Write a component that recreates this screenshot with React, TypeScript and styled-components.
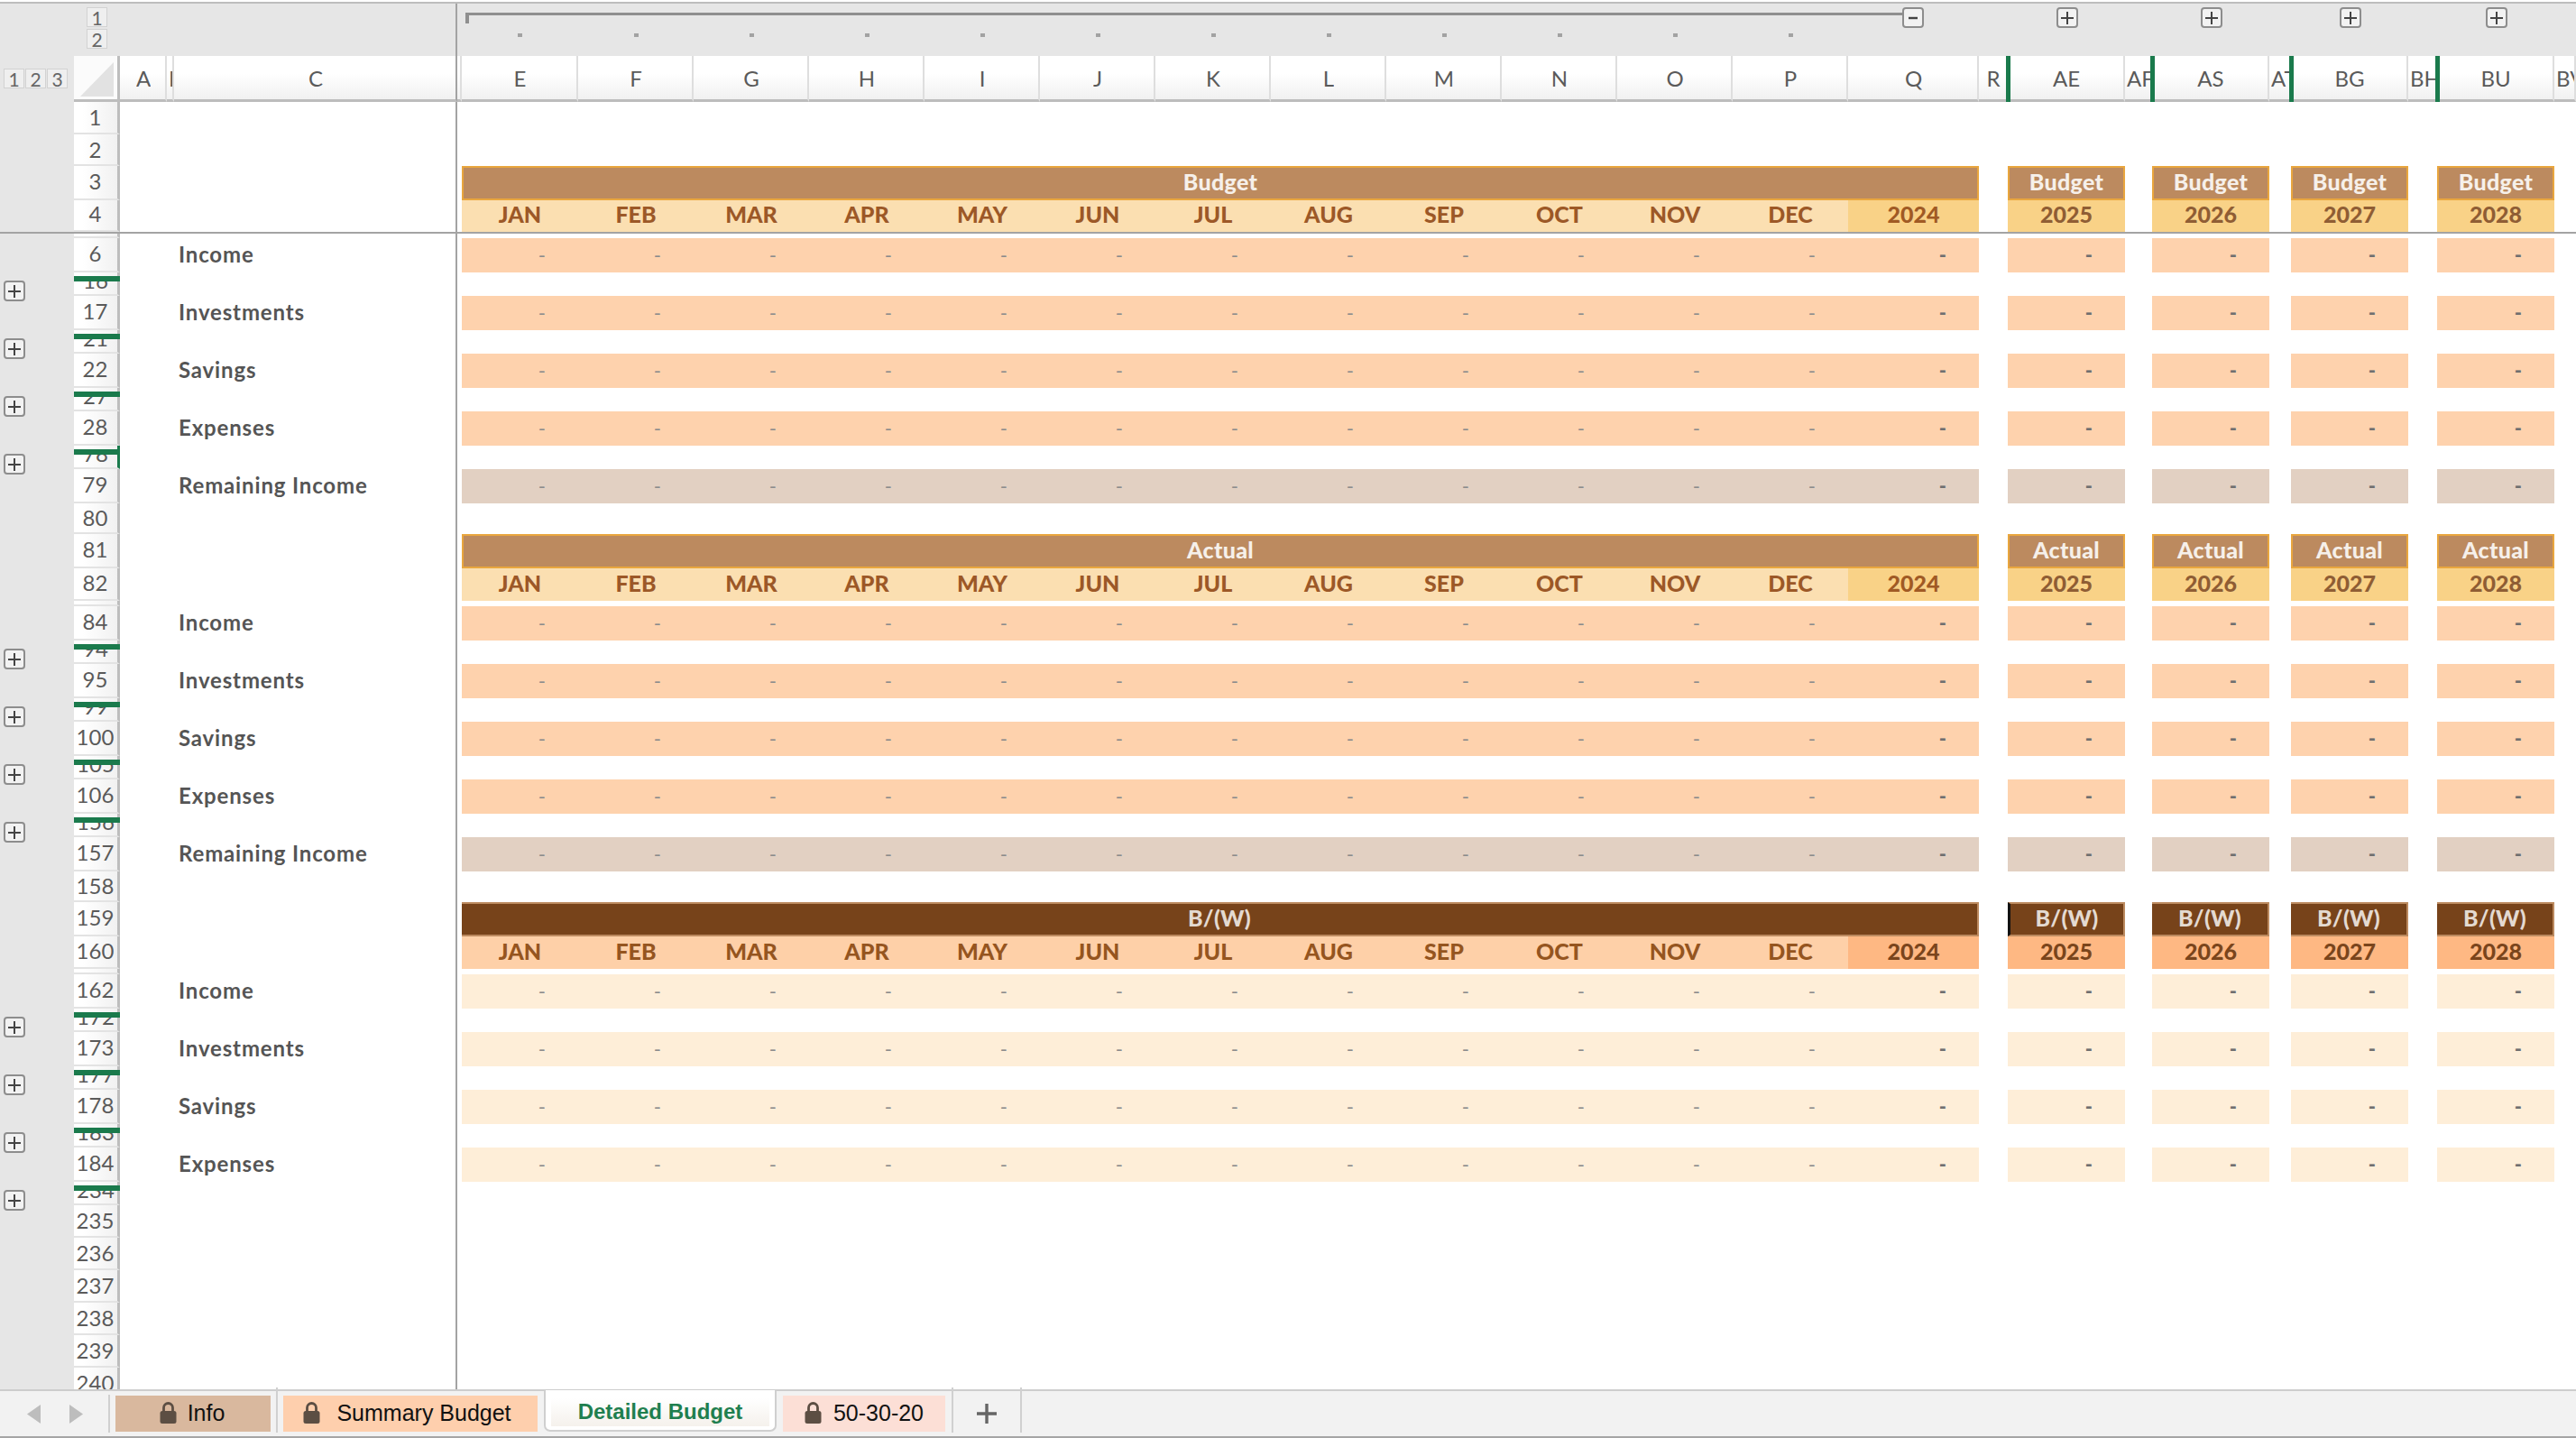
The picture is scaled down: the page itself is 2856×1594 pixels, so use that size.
import React from 'react';
import styled, { createGlobalStyle } from 'styled-components';

// one grid template shared by every row, so the bands line up with the column headers
const COLUMN_WIDTHS = [
  82, 51, 52, 8, 314, 5, 129, 128, 128, 128, 128, 128, 128, 128, 128, 128, 128, 128, 145, 32, 130,
  30, 130, 24, 130, 32, 130, 24,
];
const TEMPLATE = COLUMN_WIDTHS.map((w) => `${w}px`).join(' ');

const MONTHS = ['JAN', 'FEB', 'MAR', 'APR', 'MAY', 'JUN', 'JUL', 'AUG', 'SEP', 'OCT', 'NOV', 'DEC'];
const YEAR_COLS = [21, 23, 25, 27];
const YEARS = ['2025', '2026', '2027', '2028'];
const Q_COL = 19;
const GREEN = '#1a7a4c';

const HEADERS: { label: string; col: number; mark?: boolean; clip?: boolean }[] = [
  { label: 'A', col: 3 },
  { label: 'B', col: 4, clip: true },
  { label: 'C', col: 5 },
  { label: 'D', col: 6, clip: true },
  ...'EFGHIJKLMNOP'.split('').map((label, i) => ({ label, col: 7 + i })),
  { label: 'Q', col: 19 },
  { label: 'R', col: 20 },
  { label: 'AE', col: 21, mark: true },
  { label: 'AF', col: 22, clip: true },
  { label: 'AS', col: 23, mark: true },
  { label: 'AT', col: 24, clip: true },
  { label: 'BG', col: 25, mark: true },
  { label: 'BH', col: 26, clip: true },
  { label: 'BU', col: 27, mark: true },
  { label: 'BV', col: 28, clip: true },
];

type Tone = 'peach' | 'taupe' | 'cream';
type Theme = 'budget' | 'variance';

const TONES: Record<Tone, string> = {
  peach: '#fed2ad',
  taupe: '#e2d0c2',
  cream: '#feeed8',
};

const PALETTE = {
  budget: {
    bar: '#bc8a5f',
    edge: '#e9a63e',
    barText: '#f6f0ea',
    month: '#fbdfb1',
    strong: '#f9d287',
    monthText: '#9c5827',
    yearText: '#8f5d34',
    totalText: '#a05a24',
  },
  variance: {
    bar: '#77431a',
    edge: '#bc8a5f',
    barText: '#e4dad1',
    month: '#fed0a8',
    strong: '#feb883',
    monthText: '#95551f',
    yearText: '#7a451c',
    totalText: '#7a451c',
  },
};

const GlobalStyle = createGlobalStyle`
  * {
    box-sizing: border-box;
  }
  html,
  body {
    margin: 0;
    padding: 0;
    background: #ffffff;
  }
  body {
    font-family: Lato, 'Liberation Sans', sans-serif;
  }
`;

const Window = styled.div`
  width: 2856px;
  height: 1594px;
  display: flex;
  flex-direction: column;
  overflow: hidden;
  background: #ffffff;
`;

const OutlineBar = styled.div`
  flex: none;
  margin-top: 2px;
  height: 60px;
  border-top: 2px solid #bdbdbd;
  background: #e6e6e6;
  display: grid;
  grid-template-columns: ${TEMPLATE};
  grid-template-rows: 32px 26px;
`;

const LevelStack = styled.div`
  grid-column: 2;
  grid-row: 1 / span 2;
  padding-top: 4px;
  display: flex;
  flex-direction: column;
  align-items: center;
  gap: 2px;
`;

const LevelButton = styled.div`
  width: 23px;
  height: 22px;
  background: #efefef;
  border: 1px solid #d2d2d2;
  display: flex;
  align-items: center;
  justify-content: center;
  color: #666666;
  font-size: 21px;
  line-height: 1;
`;

const FrozenStrip = styled.div`
  grid-column: 3 / span 3;
  grid-row: 1 / span 2;
  border-right: 2px solid #a3a3a3;
`;

const OutlineTrack = styled.div`
  grid-column: 7 / span 13;
  grid-row: 1;
  padding: 4px 61px 0 4px;
  display: flex;
  align-items: flex-start;
`;

const Bracket = styled.div`
  flex: 1;
  height: 12px;
  margin-top: 6px;
  border-top: 3px solid #8f8f8f;
  border-left: 4px solid #8f8f8f;
`;

const OutlineDot = styled.div<{ $col: number }>`
  grid-column: ${({ $col }) => $col};
  grid-row: 2;
  justify-self: center;
  width: 5px;
  height: 4px;
  margin-top: 1px;
  background: #a2a2a2;
`;

const OutlineCell = styled.div<{ $col: number }>`
  grid-column: ${({ $col }) => $col};
  grid-row: 1;
  padding: 4px 0 0 2px;
  display: flex;
  justify-content: center;
`;

const ToggleButton = styled.div`
  position: relative;
  z-index: 2;
  width: 24px;
  height: 23px;
  flex: none;
  background: #f2f2f2;
  border: 2px solid #8d8d8d;
  border-radius: 4px;
  display: flex;
  align-items: center;
  justify-content: center;
`;

const HeaderRow = styled.div`
  flex: none;
  height: 51px;
  display: grid;
  grid-template-columns: ${TEMPLATE};
  background: #e6e6e6;
`;

const LevelRow = styled.div`
  grid-column: 1;
  padding-left: 4px;
  padding-bottom: 1px;
  display: flex;
  align-items: center;
  gap: 1px;
`;

const Corner = styled.div`
  grid-column: 2;
  background: #fbfbfb;
  border-right: 3px solid #bdbdbd;
  border-bottom: 3px solid #bdbdbd;
  display: flex;
  align-items: center;
  padding: 4px 0 0 7px;
`;

const ColumnHead = styled.div<{ $col: number; $mark?: boolean; $clip?: boolean; $frozen?: boolean }>`
  position: relative;
  grid-column: ${({ $col }) => $col};
  background: linear-gradient(#ffffff 40%, #f1f1f1);
  border-bottom: 3px solid #bdbdbd;
  border-right: ${({ $frozen }) => ($frozen ? '2px solid #a3a3a3' : '2px solid #dedede')};
  display: flex;
  align-items: center;
  justify-content: ${({ $clip }) => ($clip ? 'flex-start' : 'center')};
  padding-left: 2px;
  color: #5a5a5a;
  font-size: 24px;
  white-space: nowrap;
  ${({ $mark }) =>
    $mark &&
    `
    &::before {
      content: '';
      position: absolute;
      left: -2px;
      top: 0;
      bottom: -3px;
      width: 5px;
      background: ${GREEN};
    }
  `}
`;

const HeadClip = styled.div`
  overflow: hidden;
  display: flex;
  justify-content: inherit;
  min-width: 0;
  max-width: 100%;
`;

const Body = styled.div`
  flex: 1;
  min-height: 0;
  overflow: hidden;
`;

const Row = styled.div<{ $h: number }>`
  height: ${({ $h }) => $h}px;
  display: grid;
  grid-template-columns: ${TEMPLATE};
  grid-template-rows: ${({ $h }) => $h}px;
  & > * {
    grid-row: 1;
  }
`;

const Gutter = styled.div`
  grid-column: 1;
  background: #e6e6e6;
  padding: 9px 0 0 4px;
`;

const RowNumber = styled.div<{ $pad?: number }>`
  grid-column: 2;
  background: linear-gradient(90deg, #ffffff 20%, #f1f1f1);
  border-right: 3px solid #bdbdbd;
  border-bottom: 2px solid #e3e3e3;
  padding-bottom: ${({ $pad }) => $pad ?? 0}px;
  padding-right: 1px;
  display: flex;
  align-items: center;
  justify-content: center;
  color: #5a5a5a;
  font-size: 24px;
  line-height: 1;
`;

const Stub = styled.div<{ $edge?: boolean }>`
  grid-column: 2;
  padding-top: 4px;
  background: linear-gradient(90deg, #ffffff 20%, #f1f1f1);
  border-right: 3px solid ${({ $edge }) => ($edge ? GREEN : '#bdbdbd')};
  border-bottom: 2px solid #e3e3e3;
`;

const StubBar = styled.div`
  height: 6px;
  margin-right: -3px;
  background: ${GREEN};
`;

const StubClip = styled.div`
  height: 14px;
  overflow: hidden;
`;

const StubNumber = styled.div`
  margin-top: -9px;
  text-align: center;
  color: #5a5a5a;
  font-size: 24px;
  line-height: 15px;
`;

const FrozenCell = styled.div`
  grid-column: 3 / span 3;
  border-right: 2px solid #a3a3a3;
`;

const LabelCell = styled(FrozenCell)`
  padding: 0 0 3px 65px;
  display: flex;
  align-items: center;
  color: #555555;
  font-size: 24px;
  font-weight: 700;
  letter-spacing: 0.85px;
`;

const DataCell = styled.div<{ $col: number; $tone: Tone; $strong?: boolean }>`
  grid-column: ${({ $col }) => $col};
  background: ${({ $tone }) => TONES[$tone]};
  padding: 0 36px 2px 0;
  display: flex;
  align-items: center;
  justify-content: flex-end;
  color: ${({ $strong }) => ($strong ? '#6f6f6f' : '#8c8c8c')};
  font-size: 22px;
  font-weight: ${({ $strong }) => ($strong ? 900 : 400)};
`;

const BarCell = styled.div<{ $col: string; $theme: Theme; $first?: boolean }>`
  grid-column: ${({ $col }) => $col};
  background: ${({ $theme }) => PALETTE[$theme].bar};
  border: 2px solid ${({ $theme }) => PALETTE[$theme].edge};
  ${({ $theme }) => $theme === 'variance' && 'border-left: none;'}
  ${({ $first }) => $first && 'border-left: 3px solid #111111;'}
  padding-bottom: 5px;
  display: flex;
  align-items: center;
  justify-content: center;
  color: ${({ $theme }) => PALETTE[$theme].barText};
  font-size: 25px;
  font-weight: 900;
  letter-spacing: 0.3px;
`;

const MonthCell = styled.div<{ $col: number; $theme: Theme; $strong?: boolean; $color: string }>`
  grid-column: ${({ $col }) => $col};
  background: ${({ $theme, $strong }) =>
    $strong ? PALETTE[$theme].strong : PALETTE[$theme].month};
  display: flex;
  align-items: center;
  justify-content: center;
  padding-bottom: 5px;
  color: ${({ $color }) => $color};
  font-size: 25px;
  font-weight: 900;
`;

const FreezeLine = styled.div`
  height: 2px;
  background: #a3a3a3;
`;

const TabStrip = styled.div`
  flex: none;
  height: 54px;
  position: relative;
  z-index: 3;
  background: #f2f2f2;
  border-top: 2px solid #cdcdcd;
  border-bottom: 2px solid #a6a6a6;
  display: flex;
  align-items: center;
`;

const PagerZone = styled.div`
  width: 122px;
  height: 42px;
  flex: none;
  padding-left: 30px;
  border-right: 2px solid #d0d0d0;
  display: flex;
  align-items: center;
  gap: 32px;
`;

const Tab = styled.div<{ $w: number; $bg: string; $gap: number; $ml: number; $pr?: number }>`
  width: ${({ $w }) => $w}px;
  height: 40px;
  margin-left: ${({ $ml }) => $ml}px;
  padding: 0 ${({ $pr }) => $pr ?? 0}px 2px 0;
  flex: none;
  background: ${({ $bg }) => $bg};
  display: flex;
  align-items: center;
  justify-content: center;
  gap: ${({ $gap }) => $gap}px;
  color: #111111;
  font-family: 'Liberation Sans', Arial, sans-serif;
  font-size: 25px;
`;

const ActiveTab = styled.div`
  width: 258px;
  height: 46px;
  margin: -7px 0 0 7px;
  padding: 9px 6px 4px;
  flex: none;
  background: #ffffff;
  border: 2px solid #cfcfcf;
  border-top: none;
  border-radius: 0 0 7px 7px;
  display: flex;
`;

const ActiveTabLabel = styled.div`
  flex: 1;
  background: linear-gradient(#ffffff, #f5f1ec);
  display: flex;
  align-items: center;
  justify-content: center;
  color: #1f7f4f;
  font-family: 'Liberation Sans', Arial, sans-serif;
  font-size: 24px;
  font-weight: 700;
`;

const TabSeparator = styled.div<{ $ml: number }>`
  width: 2px;
  height: 50px;
  margin: -8px 0 0 ${({ $ml }) => $ml}px;
  flex: none;
  background: #d0d0d0;
`;

const AddSheet = styled.div`
  width: 74px;
  flex: none;
  display: flex;
  justify-content: center;
`;

const PlusMark = () => (
  <svg width="16" height="16" viewBox="0 0 16 16">
    <path d="M8 1v14M1 8h14" stroke="#444444" strokeWidth="2" fill="none" />
  </svg>
);

const MinusMark = () => (
  <svg width="16" height="16" viewBox="0 0 16 16">
    <path d="M3 8h10" stroke="#444444" strokeWidth="2.4" fill="none" />
  </svg>
);

const AddMark = () => (
  <svg width="22" height="22" viewBox="0 0 22 22">
    <path d="M11 0v22M0 11h22" stroke="#666666" strokeWidth="3.4" fill="none" />
  </svg>
);

const Lock = () => (
  <svg width="19" height="24" viewBox="0 0 19 24">
    <path d="M4.5 11V6.5a5 5 0 0 1 10 0V11" stroke="#5c4e43" strokeWidth="2.8" fill="none" />
    <rect x="0.5" y="10" width="18" height="14" rx="2.5" fill="#5c4e43" />
  </svg>
);

const Pager = ({ flip }: { flip?: boolean }) => (
  <svg width="15" height="21" viewBox="0 0 15 21">
    <path d={flip ? 'M0 0l15 10.5L0 21z' : 'M15 0L0 10.5 15 21z'} fill="#bdbdbd" />
  </svg>
);

const Corners = () => (
  <svg width="37" height="38" viewBox="0 0 37 38">
    <path d="M37 0v38H0z" fill="#e2e2e2" />
  </svg>
);

const BlankRow = ({ n, h, pad }: { n: number; h: number; pad?: number }) => (
  <Row $h={h}>
    <Gutter />
    <RowNumber $pad={pad}>{n}</RowNumber>
    <FrozenCell />
  </Row>
);

const DataRow = ({ n, label, tone }: { n: number; label: string; tone: Tone }) => (
  <Row $h={38}>
    <Gutter />
    <RowNumber $pad={2}>{n}</RowNumber>
    <LabelCell>{label}</LabelCell>
    {MONTHS.map((m, i) => (
      <DataCell key={m} $col={7 + i} $tone={tone}>
        -
      </DataCell>
    ))}
    <DataCell $col={Q_COL} $tone={tone} $strong>
      -
    </DataCell>
    {YEAR_COLS.map((c) => (
      <DataCell key={c} $col={c} $tone={tone} $strong>
        -
      </DataCell>
    ))}
  </Row>
);

const CollapsedRow = ({ n, edge }: { n: number; edge?: boolean }) => (
  <Row $h={26}>
    <Gutter>
      <ToggleButton>
        <PlusMark />
      </ToggleButton>
    </Gutter>
    <Stub $edge={edge}>
      <StubBar />
      <StubClip>
        <StubNumber>{n}</StubNumber>
      </StubClip>
    </Stub>
    <FrozenCell />
  </Row>
);

const GroupRows = ({
  rows,
  tone,
}: {
  rows: { n: number; label: string; hidden: number; edge?: boolean }[];
  tone: Tone;
}) => (
  <>
    {rows.map((r) => (
      <React.Fragment key={r.n}>
        <DataRow n={r.n} label={r.label} tone={tone} />
        <CollapsedRow n={r.hidden} edge={r.edge} />
      </React.Fragment>
    ))}
  </>
);

const TitleRows = ({
  title,
  theme,
  barRow,
  monthRow,
  monthHeight,
}: {
  title: string;
  theme: Theme;
  barRow: number;
  monthRow: number;
  monthHeight: number;
}) => {
  const colors = PALETTE[theme];
  return (
    <>
      <Row $h={38}>
        <Gutter />
        <RowNumber $pad={2}>{barRow}</RowNumber>
        <FrozenCell />
        <BarCell $col="7 / span 13" $theme={theme}>
          {title}
        </BarCell>
        {YEAR_COLS.map((c, i) => (
          <BarCell key={c} $col={String(c)} $theme={theme} $first={theme === 'variance' && i === 0}>
            {title}
          </BarCell>
        ))}
      </Row>
      <Row $h={monthHeight}>
        <Gutter />
        <RowNumber $pad={3}>{monthRow}</RowNumber>
        <FrozenCell />
        {MONTHS.map((m, i) => (
          <MonthCell key={m} $col={7 + i} $theme={theme} $color={colors.monthText}>
            {m}
          </MonthCell>
        ))}
        <MonthCell $col={Q_COL} $theme={theme} $strong $color={colors.totalText}>
          2024
        </MonthCell>
        {YEAR_COLS.map((c, i) => (
          <MonthCell key={c} $col={c} $theme={theme} $strong $color={colors.yearText}>
            {YEARS[i]}
          </MonthCell>
        ))}
      </Row>
    </>
  );
};

const HiddenGap = ({ h }: { h: number }) => (
  <Row $h={h}>
    <Gutter />
    <RowNumber />
    <FrozenCell />
  </Row>
);

export default function App() {
  return (
    <Window>
      <GlobalStyle />
      <OutlineBar>
        <LevelStack>
          <LevelButton>1</LevelButton>
          <LevelButton>2</LevelButton>
        </LevelStack>
        <FrozenStrip />
        <OutlineTrack>
          <Bracket />
          <ToggleButton>
            <MinusMark />
          </ToggleButton>
        </OutlineTrack>
        {MONTHS.map((m, i) => (
          <OutlineDot key={m} $col={7 + i} />
        ))}
        {YEAR_COLS.map((c) => (
          <OutlineCell key={c} $col={c}>
            <ToggleButton>
              <PlusMark />
            </ToggleButton>
          </OutlineCell>
        ))}
      </OutlineBar>

      <HeaderRow>
        <LevelRow>
          <LevelButton>1</LevelButton>
          <LevelButton>2</LevelButton>
          <LevelButton>3</LevelButton>
        </LevelRow>
        <Corner>
          <Corners />
        </Corner>
        {HEADERS.map((h) => (
          <ColumnHead
            key={h.label}
            $col={h.col}
            $mark={h.mark}
            $clip={h.clip}
            $frozen={h.label === 'C'}
          >
            <HeadClip>{h.label}</HeadClip>
          </ColumnHead>
        ))}
      </HeaderRow>

      <Body>
        <BlankRow n={1} h={36} />
        <BlankRow n={2} h={35} />
        <TitleRows title="Budget" theme="budget" barRow={3} monthRow={4} monthHeight={35} />
        <FreezeLine />
        <HiddenGap h={5} />
        <GroupRows
          tone="peach"
          rows={[
            { n: 6, label: 'Income', hidden: 16 },
            { n: 17, label: 'Investments', hidden: 21 },
            { n: 22, label: 'Savings', hidden: 27 },
            { n: 28, label: 'Expenses', hidden: 78, edge: true },
          ]}
        />
        <DataRow n={79} label="Remaining Income" tone="taupe" />
        <BlankRow n={80} h={34} />
        <TitleRows title="Actual" theme="budget" barRow={81} monthRow={82} monthHeight={36} />
        <HiddenGap h={6} />
        <GroupRows
          tone="peach"
          rows={[
            { n: 84, label: 'Income', hidden: 94 },
            { n: 95, label: 'Investments', hidden: 99 },
            { n: 100, label: 'Savings', hidden: 105 },
            { n: 106, label: 'Expenses', hidden: 156 },
          ]}
        />
        <DataRow n={157} label="Remaining Income" tone="taupe" />
        <BlankRow n={158} h={34} />
        <TitleRows title="B/(W)" theme="variance" barRow={159} monthRow={160} monthHeight={36} />
        <HiddenGap h={6} />
        <GroupRows
          tone="cream"
          rows={[
            { n: 162, label: 'Income', hidden: 172 },
            { n: 173, label: 'Investments', hidden: 177 },
            { n: 178, label: 'Savings', hidden: 183 },
            { n: 184, label: 'Expenses', hidden: 234 },
          ]}
        />
        {[235, 236, 237, 238, 239, 240].map((n) => (
          <BlankRow key={n} n={n} h={36} />
        ))}
      </Body>

      <TabStrip>
        <PagerZone>
          <Pager />
          <Pager flip />
        </PagerZone>
        <Tab $w={172} $bg="#d9b89e" $gap={12} $ml={6} $pr={2}>
          <Lock />
          Info
        </Tab>
        <TabSeparator $ml={6} />
        <Tab $w={282} $bg="#fecfad" $gap={18} $ml={6} $pr={7}>
          <Lock />
          Summary Budget
        </Tab>
        <ActiveTab>
          <ActiveTabLabel>Detailed Budget</ActiveTabLabel>
        </ActiveTab>
        <Tab $w={180} $bg="#fcdfd6" $gap={13} $ml={7}>
          <Lock />
          50-30-20
        </Tab>
        <TabSeparator $ml={7} />
        <AddSheet>
          <AddMark />
        </AddSheet>
        <TabSeparator $ml={0} />
      </TabStrip>
    </Window>
  );
}
